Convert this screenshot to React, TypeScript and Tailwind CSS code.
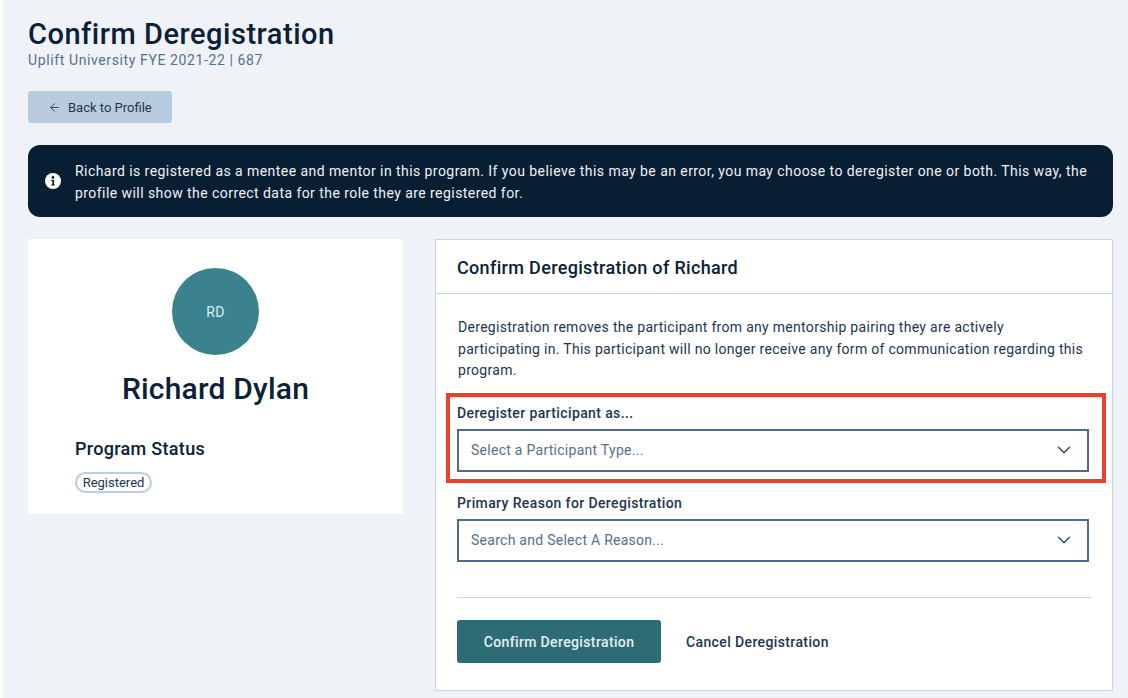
import { ArrowLeft, ChevronDown } from "lucide-react";

function Select({ text }: { text: string }) {
  return (
    <div className="flex h-[43px] w-[632px] items-center justify-between border-2 border-[#4f6b8c] bg-white pl-[12px] pr-[12px]">
      <span className="text-[14px] tracking-[0.27px] text-[#55708f]">{text}</span>
      <ChevronDown size={22} strokeWidth={1.4} className="text-[#28405c]" />
    </div>
  );
}

export default function App() {
  return (
    <div className="h-[698px] w-[1128px] overflow-hidden bg-white pl-[3px] font-['Roboto',sans-serif] text-[#0a2136]">
      <div className="h-[698px] bg-[#eff3f8] pl-[25px] pr-[15px] pt-[17px]">
        <h1 className="text-[29px] font-medium leading-[34px] tracking-[0.52px]">Confirm Deregistration</h1>
        <p className="text-[14px] leading-[18px] tracking-[0.61px] text-[#55708f]">Uplift University FYE 2021-22 | 687</p>
        <button className="mt-[22px] flex h-[32px] w-[144px] items-center gap-[7px] rounded-[3px] bg-[#b9cbde] pl-[20px] pt-px text-[13px] text-[#1d3650]">
          <ArrowLeft size={13} strokeWidth={1.6} />
          Back to Profile
        </button>
        <div className="mt-[22px] flex h-[72px] items-center rounded-[12px] bg-[#081f33] pl-[17px] pr-[22px] text-white">
          <svg width="16" height="16" viewBox="0 0 16 16" className="shrink-0">
            <circle cx="8" cy="8" r="8" fill="#fff" />
            <circle cx="8" cy="4.4" r="1.4" fill="#081f33" />
            <path d="M6.2 6.8h2.8v4.6h1v1.2H6.2v-1.2h1.1V8H6.2z" fill="#081f33" />
          </svg>
          <p className="ml-[14px] pt-px text-[14px] leading-[22px] tracking-[0.44px] text-[#eef2f6]">
            Richard is registered as a mentee and mentor in this program. If you believe this may be an error, you may choose to deregister one or both. This way, the profile will show the correct data for the role they are registered for.
          </p>
        </div>
        <div className="mt-[22px] flex items-start gap-[32px]">
          <section className="h-[275px] w-[375px] bg-white pt-[29px]">
            <div className="mx-auto flex h-[87px] w-[87px] items-center justify-center rounded-full bg-[#3c828e] pt-px text-[14px] tracking-[0.3px] text-[#d7eef0]">RD</div>
            <h2 className="mt-[16px] text-center text-[30px] font-medium leading-[36px] tracking-[0.2px]">Richard Dylan</h2>
            <div className="pl-[47px]">
              <h3 className="mt-[29px] text-[18px] font-medium leading-[26px] tracking-[0.3px]">Program Status</h3>
              <span className="mt-[10px] inline-flex h-[21px] w-[77px] items-center justify-center rounded-full border-2 border-[#bccde0] text-[13px] text-[#1d3650]">Registered</span>
            </div>
          </section>
          <section className="h-[452px] w-[678px] border border-[#c6d4e3] bg-white">
            <div className="flex h-[54px] items-center border-b border-[#c6d4e3] pl-[21px] pt-[2px]">
              <h2 className="text-[18px] font-medium tracking-[0.33px]">Confirm Deregistration of Richard</h2>
            </div>
            <div className="pl-[21px] pr-[21px]">
              <p className="mt-[23px] w-[632px] pl-[1px] text-[14px] leading-[21.5px] tracking-[0.3px] text-[#1d3650]">
                Deregistration removes the participant from any mentorship pairing they are actively participating in. This participant will no longer receive any form of communication regarding this program.
              </p>
              <label className="mt-[22px] block text-[14px] font-medium leading-[18px] tracking-[0.38px] text-[#1d3650]">Deregister participant as...</label>
              <div className="mt-[7px]"><Select text="Select a Participant Type..." /></div>
              <label className="mt-[22px] block text-[14px] font-medium leading-[18px] tracking-[0.38px] text-[#1d3650]">Primary Reason for Deregistration</label>
              <div className="mt-[7px]"><Select text="Search and Select A Reason..." /></div>
              <div className="mt-[35.5px] h-px w-[634px] bg-[#c6d4e3]" />
              <div className="mt-[22px] flex items-center gap-[25px]">
                <button className="h-[43px] w-[204px] rounded-[3px] bg-[#2e6c75] pt-px text-[14px] font-medium tracking-[0.37px] text-[#e4f0f1]">Confirm Deregistration</button>
                <button className="pt-px text-[14px] font-medium tracking-[0.38px] text-[#1d3650]">Cancel Deregistration</button>
              </div>
            </div>
          </section>
        </div>
      </div>
      <div className="pointer-events-none absolute left-[446px] top-[393px] h-[90px] w-[660px] border-[4px] border-[#e8432a]" />
    </div>
  );
}
